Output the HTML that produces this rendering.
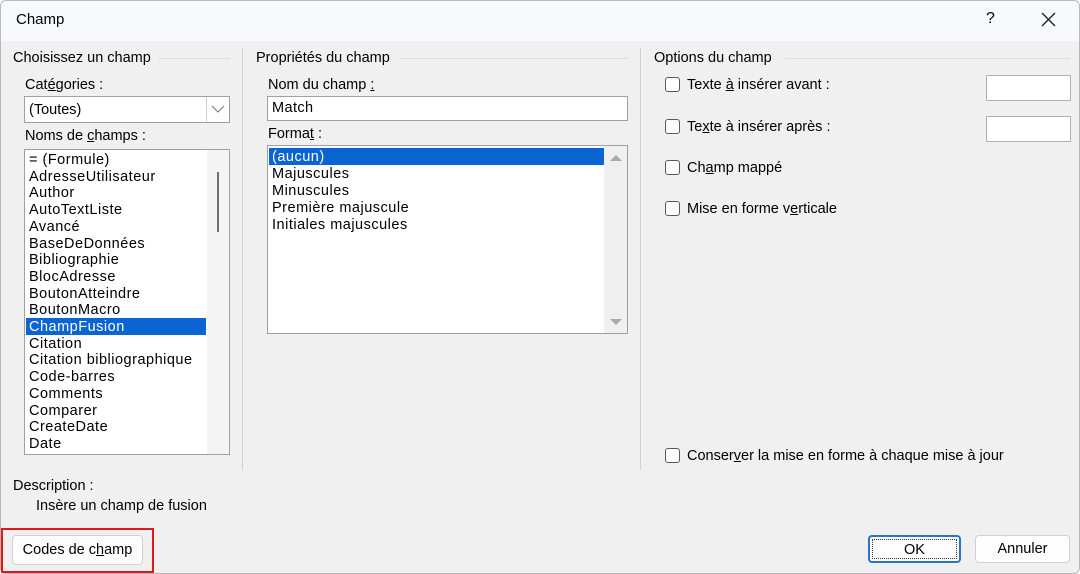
<!DOCTYPE html>
<html><head><meta charset="utf-8"><style>
*{box-sizing:border-box;margin:0;padding:0}
body{width:1080px;height:574px;background:#fff;font-family:"Liberation Sans",sans-serif;font-size:14.5px;color:#000;position:relative;overflow:hidden}
.a{position:absolute;white-space:nowrap}
.win{position:absolute;left:0;top:0;width:1080px;height:574px;background:#f0f0f0;border:1px solid #b8b8b8;border-radius:6px}
.title{position:absolute;left:1px;top:1px;width:1078px;height:40px;background:#f7f9fc;border-radius:6px 6px 0 0}
.box{position:absolute;background:#fff;border:1px solid #a0a0a0}
.hl{position:absolute;height:1px;background:#dcdcdc}
.vl{position:absolute;width:1px;background:#d0d0d0}
.cb{position:absolute;width:15px;height:15px;border:1px solid #5a5a5a;border-radius:3px;background:#fff}
.btn{position:absolute;background:#fdfdfd;border:1px solid #d0d0d0;border-radius:4px;text-align:center;line-height:26px}
.li{position:absolute;left:4px;height:16.7px;line-height:18px;letter-spacing:0.5px}
u{text-decoration:underline}
</style></head><body>
<div class="win"></div>
<div class="title"></div>
<div class="a" style="left:16px;top:11px;font-size:15px">Champ</div>
<div class="a" style="left:986px;top:10px;font-size:16px">?</div>
<svg class="a" style="left:1041px;top:12px" width="15" height="15"><path d="M1 1L14 14M14 1L1 14" stroke="#222" stroke-width="1.4"/></svg>

<div class="a" style="left:13px;top:50px">Choisissez un champ</div>
<div class="hl" style="left:158px;top:58px;width:72px"></div>
<div class="vl" style="left:242px;top:48px;height:422px"></div>
<div class="a" style="left:25px;top:77px">Cat<u>é</u>gories :</div>
<div class="box" style="left:24px;top:96px;width:206px;height:27px"></div>
<div class="a" style="left:29px;top:102px">(Toutes)</div>
<div class="a" style="left:206px;top:97px;width:1px;height:25px;background:#d0d0d0"></div>
<svg class="a" style="left:211px;top:104px" width="14" height="10"><path d="M1 2L7 8L13 2" stroke="#777" fill="none"/></svg>
<div class="a" style="left:25px;top:128px">Noms de <u>c</u>hamps :</div>
<div class="box" style="left:24px;top:149px;width:206px;height:306px;overflow:hidden">
<div class="a" style="left:1px;top:168px;width:180px;height:17px;background:#0a64d2"></div>
<div class="a" style="left:182px;top:0;width:22px;height:304px;background:#f4f4f4"></div>
<div class="a" style="left:192px;top:22px;width:2px;height:60px;background:#707070"></div>
<div class="li" style="top:1px">= (Formule)</div>
<div class="li" style="top:17.7px">AdresseUtilisateur</div>
<div class="li" style="top:34.4px">Author</div>
<div class="li" style="top:51.1px">AutoTextListe</div>
<div class="li" style="top:67.8px">Avancé</div>
<div class="li" style="top:84.5px">BaseDeDonnées</div>
<div class="li" style="top:101.2px">Bibliographie</div>
<div class="li" style="top:117.9px">BlocAdresse</div>
<div class="li" style="top:134.6px">BoutonAtteindre</div>
<div class="li" style="top:151.3px">BoutonMacro</div>
<div class="li" style="top:168px;color:#fff">ChampFusion</div>
<div class="li" style="top:184.7px">Citation</div>
<div class="li" style="top:201.4px">Citation bibliographique</div>
<div class="li" style="top:218.1px">Code-barres</div>
<div class="li" style="top:234.8px">Comments</div>
<div class="li" style="top:251.5px">Comparer</div>
<div class="li" style="top:268.2px">CreateDate</div>
<div class="li" style="top:284.9px">Date</div>
</div>

<div class="a" style="left:256px;top:50px">Propriétés du champ</div>
<div class="hl" style="left:400px;top:58px;width:228px"></div>
<div class="vl" style="left:640px;top:48px;height:422px"></div>
<div class="a" style="left:268px;top:77px">Nom du champ <u>:</u></div>
<div class="box" style="left:267px;top:96px;width:361px;height:25px"></div>
<div class="a" style="left:272px;top:100px;letter-spacing:0.4px">Match</div>
<div class="a" style="left:268px;top:126px">Forma<u>t</u> :</div>
<div class="box" style="left:267px;top:145px;width:361px;height:189px;overflow:hidden">
<div class="a" style="left:1px;top:2px;width:335px;height:17px;background:#0a64d2"></div>
<div class="a" style="left:336px;top:0;width:24px;height:188px;background:#f0f0f0"></div>
<svg class="a" style="left:341px;top:8px" width="14" height="8"><path d="M1 7L7 1L13 7Z" fill="#a8a8a8"/></svg>
<svg class="a" style="left:341px;top:172px" width="14" height="8"><path d="M1 1L7 7L13 1Z" fill="#a8a8a8"/></svg>
<div class="li" style="top:2px;color:#fff">(aucun)</div>
<div class="li" style="top:19px">Majuscules</div>
<div class="li" style="top:36px">Minuscules</div>
<div class="li" style="top:53px">Première majuscule</div>
<div class="li" style="top:70px">Initiales majuscules</div>
</div>

<div class="a" style="left:654px;top:50px">Options du champ</div>
<div class="hl" style="left:785px;top:58px;width:285px"></div>
<div class="cb" style="left:665px;top:77px"></div>
<div class="a" style="left:687px;top:77px">Texte <u>à</u> insérer avant :</div>
<div class="box" style="left:986px;top:75px;width:85px;height:26px;border-color:#b0b0b0"></div>
<div class="cb" style="left:665px;top:119px"></div>
<div class="a" style="left:687px;top:119px">Te<u>x</u>te à insérer après :</div>
<div class="box" style="left:986px;top:116px;width:85px;height:26px;border-color:#b0b0b0"></div>
<div class="cb" style="left:665px;top:160px"></div>
<div class="a" style="left:687px;top:160px">Ch<u>a</u>mp mappé</div>
<div class="cb" style="left:665px;top:201px"></div>
<div class="a" style="left:687px;top:201px">Mise en forme v<u>e</u>rticale</div>
<div class="cb" style="left:665px;top:448px"></div>
<div class="a" style="left:687px;top:448px">Conser<u>v</u>er la mise en forme à chaque mise à jour</div>

<div class="a" style="left:13px;top:478px">Description :</div>
<div class="a" style="left:36px;top:498px">Insère un champ de fusion</div>

<div class="a" style="left:1px;top:528px;width:153px;height:45px;border:2px solid #e01818"></div>
<div class="btn" style="left:12px;top:535px;width:131px;height:30px;line-height:28px">Codes de c<u>h</u>amp</div>
<div class="btn" style="left:868px;top:535px;width:93px;height:28px;border:2px solid #2a74c8"><div style="position:absolute;inset:2px;border:1px dotted #333;line-height:20px">OK</div></div>
<div class="btn" style="left:975px;top:535px;width:95px;height:28px">Annuler</div>
</body></html>
